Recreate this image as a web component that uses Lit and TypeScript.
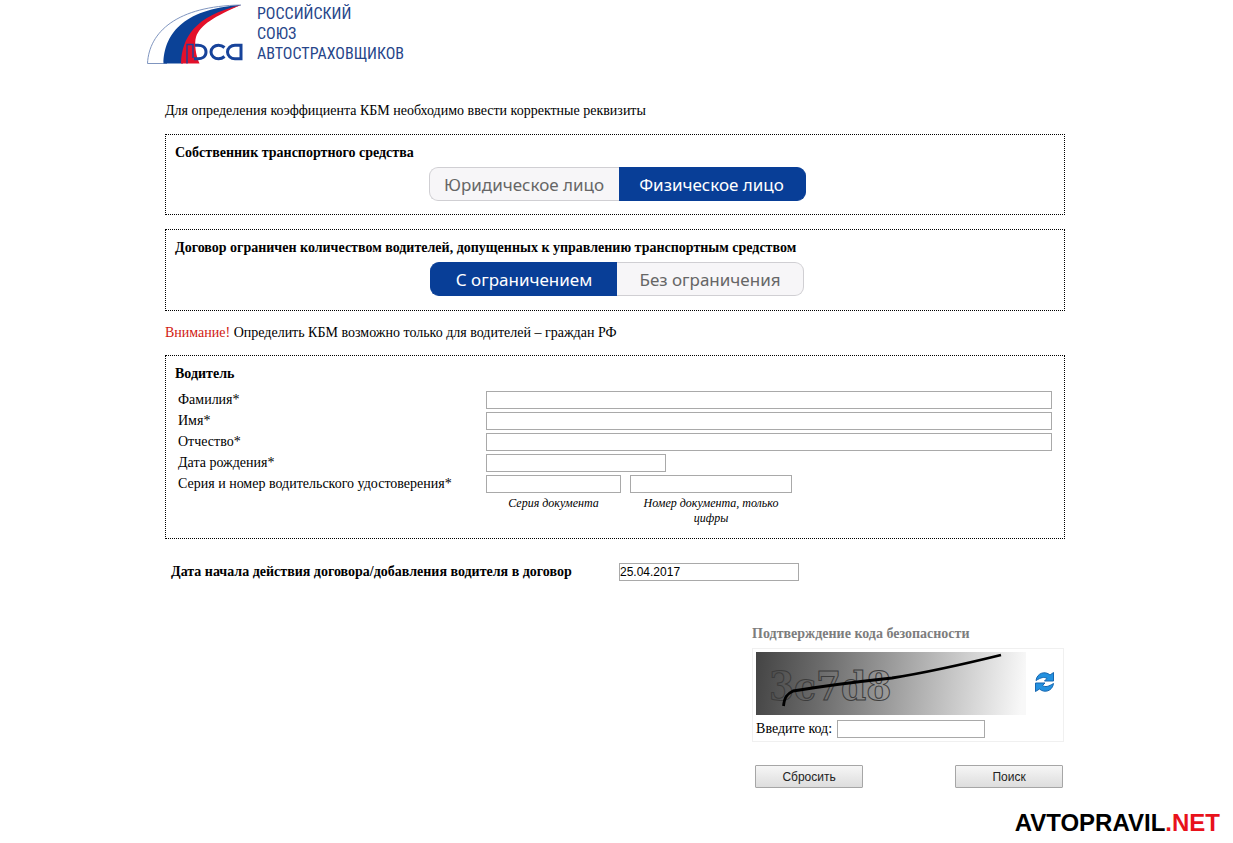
import { LitElement, html, css, svg } from "lit";
import { customElement, state } from "lit/decorators.js";

@customElement("rsa-logo")
class RsaLogo extends LitElement {
  static styles = css`
    :host { display: flex; align-items: flex-start; gap: 13px; color: #27468a; }
    svg { display: block; flex: none; margin-top: 4px; }
    .name {
      margin: 0;
      font: 16px/20px "Liberation Sans Narrow", "Roboto Condensed", "DejaVu Sans Condensed", sans-serif;
      padding-top: 4px;
    }
  `;
  render() {
    return html`
      <svg width="97" height="60" viewBox="0 0 97 60" aria-hidden="true">
        <path d="M.5 59.500C2 28 30 2 94 1" fill="none" stroke="#7f95bf" />
        <path d="M.5 59.500H20" stroke="#7f95bf" />
        <path d="M16.500 59.500C17 32 34 5 94 1C60 12 40 30 36 59.500Z" fill="#0b4297" />
        <path d="M34 59.500C35 34 47 12 94 1C68 12 53 21 49 33C47 40 49 52 52.500 59.500Z" fill="#e3102a" />
        <g fill="none" stroke="#17439a">
          <path d="M40 59.500V40.500H46V54" stroke-width="1.400" />
          <path d="M48 41.200H51C54.500 41.200 59 43 59 48S54.500 54.800 51 54.800H47" stroke-width="3" />
          <path d="M77.500 43.500C75.500 41.800 73.500 41.200 71.500 41.200C67.500 41.200 64 44 64 48S67.500 54.800 71.500 54.800C73.500 54.800 75.500 54.200 77.500 52.500" stroke-width="3" />
          <path d="M94 39.700V56.300M94 41.200H88C84 41.200 80.500 44 80.500 48S84 54.800 88 54.800H94" stroke-width="3" />
        </g>
      </svg>
      <p class="name">РОССИЙСКИЙ<br />СОЮЗ<br />АВТОСТРАХОВЩИКОВ</p>
    `;
  }
}

const captchaGlyphs = svg`
  <text x="13" y="48" class="glyphs">3c7d8</text>
  <path d="M27.500 54C28.500 45 31 42 37 39Q80 32 136 26Q180 19 245 3" fill="none" stroke="#000" stroke-width="2.800" />
`;

@customElement("app-root")
class AppRoot extends LitElement {
  static styles = css`
    :host {
      display: block;
      box-sizing: border-box;
      background: #fff;
      color: #000;
      font: 14px/18px "Liberation Serif", "Times New Roman", serif;
    }
    * { box-sizing: border-box; }
    header { padding-left: 147px; }
    form { width: 73%; min-width: 680px; margin: 38px auto 0 165px; }
    p, h2 { margin: 0; }
    h2 { font-size: 14px; line-height: 18px; }
    .box { border: 1px dotted #000; padding: 9px; }
    .owner { margin-top: 14px; min-height: 81px; }
    .limit { margin-top: 14px; min-height: 82px; }
    .notice { margin: 13px 0; }
    .notice strong { color: #d11a12; font-weight: normal; }
    .switch { display: flex; justify-content: center; margin-top: 5px; padding-left: 4px; }
    .switch button {
      height: 34px;
      width: 187px;
      padding: 0;
      border: 1px solid #d0cfd3;
      background: #f7f6f8;
      color: #666;
      font: 17px "Noto Sans", Tahoma, sans-serif;
    }
    .switch .wide { width: 190px; }
    .switch button:first-child { border-radius: 9px 0 0 9px; border-right: 0; }
    .switch button:last-child { border-radius: 0 9px 9px 0; border-left: 0; }
    .switch button.on { background: #083e97; border-color: #083e97; color: #fff; }
    input {
      height: 18px;
      padding: 0;
      border: 1px solid #a9a9a9;
      background: #fff;
      font: 12px "Liberation Sans", Arial, sans-serif;
    }
    .driver { padding: 9px 12px 12px 9px; }
    .fields { display: grid; grid-template-columns: 308px 1fr; row-gap: 3px; margin-top: 8px; padding-left: 3px; align-items: start; }
    .full { width: 100%; }
    .date { width: 180px; }
    .docs { display: flex; gap: 9px; }
    .docs label { display: flex; flex-direction: column; gap: 3px; font: italic 12px/15px "Liberation Serif", serif; text-align: center; }
    .series { width: 135px; }
    .number { width: 162px; }
    .start { display: grid; grid-template-columns: 448px auto; justify-content: start; align-items: center; margin-top: 24px; padding-left: 6px; font-weight: bold; }
    .bottom { width: 312px; margin: 44px 1px 0 auto; }
    .bottom h2 { color: #7d7d7d; }
    .captcha { border: 1px solid #f0f0f0; padding: 3px; margin-top: 5px; }
    .picture { display: flex; align-items: center; gap: 8px; }
    .picture svg { display: block; }
    .glyphs { font: bold 40px "DejaVu Serif Condensed", "DejaVu Serif", serif; fill: none; stroke: #3c3c3c; stroke-width: 1; }
    .refresh { padding: 0 0 4px; border: 0; background: none; }
    .code { display: flex; align-items: center; gap: 5px; margin-top: 5px; }
    .code input { width: 148px; }
    .actions { display: flex; justify-content: space-between; padding: 0 1px 0 3px; margin-top: 23px; }
    .actions button {
      width: 108px;
      height: 23px;
      padding: 0;
      border: 1px solid #a6a6a6;
      border-radius: 1px;
      background: linear-gradient(#f6f6f6, #dddddd);
      color: #222;
      font: 12px "Liberation Sans", Arial, sans-serif;
    }
    footer { padding: 20px 13px 0 0; text-align: right; font: bold 24px/30px "Liberation Sans", Arial, sans-serif; }
    footer span { color: #e8121b; }
  `;

  @state() private person = 1;
  @state() private limited = 0;

  private choice(names: string[], current: number, wide: boolean, pick: (i: number) => void) {
    return html`<div class="switch" role="group">
      ${names.map((n, i) => html`<button type="button" class="${i === current ? "on" : ""} ${wide && i === 0 ? "wide" : ""}"
        aria-pressed=${i === current} @click=${() => pick(i)}>${n}</button>`)}
    </div>`;
  }

  render() {
    return html`
      <header><rsa-logo></rsa-logo></header>
      <form @submit=${(e: Event) => e.preventDefault()}>
        <p>Для определения коэффициента КБМ необходимо ввести корректные реквизиты</p>
        <section class="box owner">
          <h2>Собственник транспортного средства</h2>
          ${this.choice(["Юридическое лицо", "Физическое лицо"], this.person, true, (i) => (this.person = i))}
        </section>
        <section class="box limit">
          <h2>Договор ограничен количеством водителей, допущенных к управлению транспортным средством</h2>
          ${this.choice(["С ограничением", "Без ограничения"], this.limited, false, (i) => (this.limited = i))}
        </section>
        <p class="notice"><strong>Внимание!</strong> Определить КБМ возможно только для водителей – граждан РФ</p>
        <section class="box driver">
          <h2>Водитель</h2>
          <div class="fields">
            <label for="surname">Фамилия*</label><input id="surname" class="full" />
            <label for="name">Имя*</label><input id="name" class="full" />
            <label for="patronymic">Отчество*</label><input id="patronymic" class="full" />
            <label for="birth">Дата рождения*</label><input id="birth" class="date" />
            <span>Серия и номер водительского удостоверения*</span>
            <div class="docs">
              <label class="series"><input class="full" />Серия документа</label>
              <label class="number"><input class="full" />Номер документа, только цифры</label>
            </div>
          </div>
        </section>
        <div class="start">
          <label for="start">Дата начала действия договора/добавления водителя в договор</label>
          <input id="start" class="date" value="25.04.2017" />
        </div>
        <div class="bottom">
          <h2>Подтверждение кода безопасности</h2>
          <div class="captcha">
            <div class="picture">
              <svg width="270" height="63" viewBox="0 0 270 63">
                <defs><linearGradient id="shade" gradientUnits="userSpaceOnUse" x1="0" y1="0" x2="268" y2="30">
                  <stop offset="0" stop-color="#444" /><stop offset=".25" stop-color="#6c6c6c" /><stop offset=".5" stop-color="#9a9a9a" /><stop offset="1" stop-color="#f8f8f8" />
                </linearGradient></defs>
                <rect width="270" height="63" fill="url(#shade)" />
                ${captchaGlyphs}
              </svg>
              <button type="button" class="refresh" aria-label="Обновить код">
                <svg width="22" height="22" viewBox="0 0 22 22">
                  <path d="M2 9.500C3 2 11 -.5 16 4L19.500 1.500V10H10.500L13 7.500C10 5.500 7 6.500 2 9.500Z" fill="#2391e0" stroke="#1767b0" stroke-linejoin="round" />
                  <path d="M19.500 12.500C18.500 20 10.500 22.500 5.500 18L1.500 20.500V12H11L8.500 14.500C11.500 16.500 14.500 15.500 19.500 12.500Z" fill="#2391e0" stroke="#1767b0" stroke-linejoin="round" />
                </svg>
              </button>
            </div>
            <div class="code"><label for="code">Введите код:</label><input id="code" /></div>
          </div>
          <div class="actions"><button type="reset">Сбросить</button><button type="submit">Поиск</button></div>
        </div>
      </form>
      <footer>AVTOPRAVIL<span>.NET</span></footer>
    `;
  }
}
